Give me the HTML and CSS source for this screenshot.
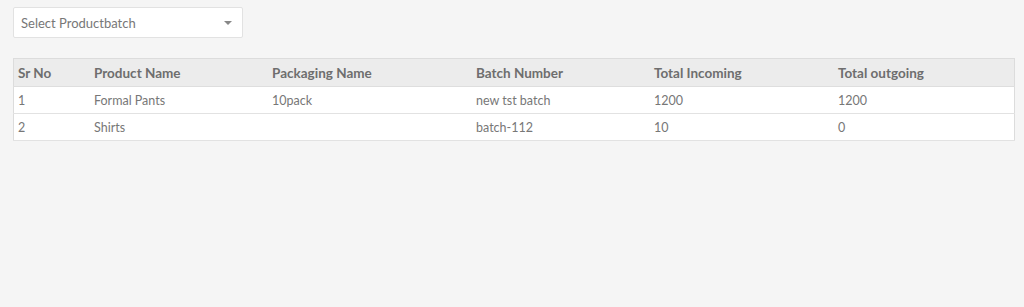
FILE: index.html
```html
<!DOCTYPE html>
<html lang="en">
<head>
    <meta charset="UTF-8">
    <meta name="viewport" content="width=device-width, initial-scale=1.0">
    <title>Product Batch</title>
    <link rel="stylesheet" href="styles.css">
</head>
<body>
    <div class="page">
        <div class="select-box">
            <span class="select-text">Select Productbatch</span>
            <span class="select-arrow"></span>
        </div>
        <table class="batch-table">
            <thead>
                <tr>
                    <th class="col-sr">Sr No</th>
                    <th class="col-product">Product Name</th>
                    <th class="col-pack">Packaging Name</th>
                    <th class="col-batch">Batch Number</th>
                    <th class="col-in">Total Incoming</th>
                    <th>Total outgoing</th>
                </tr>
            </thead>
            <tbody>
                <tr>
                    <td>1</td>
                    <td>Formal Pants</td>
                    <td>10pack</td>
                    <td>new tst batch</td>
                    <td>1200</td>
                    <td>1200</td>
                </tr>
                <tr>
                    <td>2</td>
                    <td>Shirts</td>
                    <td></td>
                    <td>batch-112</td>
                    <td>10</td>
                    <td>0</td>
                </tr>
            </tbody>
        </table>
    </div>
</body>
</html>
```

FILE: styles.css
```css
body {
    margin: 0;
    font-family: Lato, "Open Sans", sans-serif;
    background: #f5f5f5;
    color: #777;
}

.page {
    padding: 7px 9px 0 13px;
}

.select-box {
    display: flex;
    align-items: center;
    justify-content: space-between;
    width: 230px;
    height: 31px;
    box-sizing: border-box;
    background: #fff;
    border: 1px solid #e2e2e2;
    border-radius: 2px;
    padding: 0 10px 0 7px;
    font-size: 13px;
    color: #777;
}

.select-arrow {
    width: 0;
    height: 0;
    border-left: 4px solid transparent;
    border-right: 4px solid transparent;
    border-top: 4px solid #888;
}

.batch-table {
    margin-top: 20px;
    width: 1002px;
    border-collapse: collapse;
    border: 1px solid #dcdcdc;
    font-size: 12.5px;
}

.batch-table th {
    background: #ececec;
    color: #6e6e6e;
    font-weight: bold;
    font-size: 13.5px;
    text-align: left;
    height: 27px;
    padding: 0 4px;
    border-bottom: 1px solid #dedede;
}

.batch-table td {
    background: #fff;
    height: 26px;
    padding: 0 4px;
    border-bottom: 1px solid #e2e2e2;
}

.col-sr { width: 68px; }
.col-product { width: 170px; }
.col-pack { width: 196px; }
.col-batch { width: 170px; }
.col-in { width: 176px; }
```
